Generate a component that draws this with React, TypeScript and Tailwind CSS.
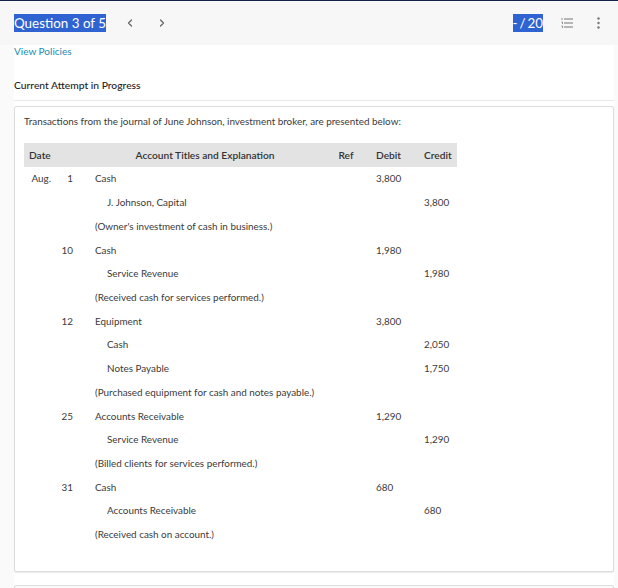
import { ChevronLeft, ChevronRight } from "lucide-react";

type Row = { date?: string; day?: string; account: string; indent?: boolean; debit?: string; credit?: string };

const rows: Row[] = [
  { date: "Aug.", day: "1", account: "Cash", debit: "3,800" },
  { account: "J. Johnson, Capital", indent: true, credit: "3,800" },
  { account: "(Owner's investment of cash in business.)" },
  { day: "10", account: "Cash", debit: "1,980" },
  { account: "Service Revenue", indent: true, credit: "1,980" },
  { account: "(Received cash for services performed.)" },
  { day: "12", account: "Equipment", debit: "3,800" },
  { account: "Cash", indent: true, credit: "2,050" },
  { account: "Notes Payable", indent: true, credit: "1,750" },
  { account: "(Purchased equipment for cash and notes payable.)" },
  { day: "25", account: "Accounts Receivable", debit: "1,290" },
  { account: "Service Revenue", indent: true, credit: "1,290" },
  { account: "(Billed clients for services performed.)" },
  { day: "31", account: "Cash", debit: "680" },
  { account: "Accounts Receivable", indent: true, credit: "680" },
  { account: "(Received cash on account.)" },
];

export default function App() {
  return (
    <div className="h-[588px] overflow-hidden bg-[#fafafa] font-['Lato',sans-serif] text-[#3a3a3a]">
      <div className="h-px bg-[#14204a]" />
      <div className="flex h-[44px] items-center bg-[#f7f7f7] pl-[14px] pr-[14px]">
        <span className="mb-[1px] bg-[#2f63d2] text-[13.4px] leading-[18px] text-white">Question 3 of 5</span>
        <ChevronLeft className="ml-[18px] h-[12px] w-[12px] text-[#666]" strokeWidth={2.5} />
        <ChevronRight className="ml-[20px] h-[12px] w-[12px] text-[#666]" strokeWidth={2.5} />
        <span className="mb-[1px] ml-auto whitespace-nowrap bg-[#2f63d2] text-[13.4px] leading-[18px] text-white [word-spacing:-1.5px]">- / 20</span>
        <svg className="ml-[18px] h-[12px] w-[12px]" viewBox="0 0 12 12" fill="none" stroke="#777">
          <path d="M3 2h9M3 6h9M3 10h9" strokeWidth="1.2" />
          <path d="M1 1v2M.5 5h1v2M.5 9h1v2" strokeWidth="0.8" />
        </svg>
        <svg className="ml-[24px] mr-[4px] h-[12px] w-[3px]" viewBox="0 0 3 12" fill="#777">
          <circle cx="1.5" cy="1.5" r="1.2" />
          <circle cx="1.5" cy="6" r="1.2" />
          <circle cx="1.5" cy="10.5" r="1.2" />
        </svg>
      </div>
      <div className="mx-[14px] mr-[4px] bg-white">
        <div className="h-[56px] border-b border-[#e8e8e8]">
          <a className="block text-[10px] leading-[13px] text-[#1a8bb5]">View Policies</a>
          <p className="mt-[21px] text-[10.3px] font-medium leading-[13px] text-[#222]">Current Attempt in Progress</p>
        </div>
        <div className="mt-[5px] h-[466px] rounded-[2px] border border-[#ddd] bg-white pl-[9px] pt-[8px] shadow-[0_1px_1px_rgba(0,0,0,0.08)]">
          <p className="text-[9.9px] leading-[13px]">Transactions from the journal of June Johnson, investment broker, are presented below:</p>
          <table className="mt-[15px] w-[433px] table-fixed border-collapse text-[9.9px] leading-[13px]">
            <colgroup>
              <col className="w-[34px]" />
              <col className="w-[29px]" />
              <col className="w-[236px]" />
              <col className="w-[46px]" />
              <col className="w-[48px]" />
              <col className="w-[40px]" />
            </colgroup>
            <thead>
              <tr className="h-[24px] bg-[#e3e3e3] text-[10.2px] text-[#333]">
                <th colSpan={2} className="pl-[5px] text-left font-semibold">Date</th>
                <th className="text-center font-semibold">Account Titles and Explanation</th>
                <th className="text-center font-semibold">Ref</th>
                <th className="pl-[7px] text-left font-semibold">Debit</th>
                <th className="pl-[7px] text-left font-semibold">Credit</th>
              </tr>
            </thead>
            <tbody>
              {rows.map((r, i) => (
                <tr key={i} className="h-[23.73px]">
                  <td className="pr-[7px] text-right">{r.date}</td>
                  <td className="pr-[14px] text-right">{r.day}</td>
                  <td className={r.indent ? "pl-[20px]" : "pl-[8px]"}>{r.account}</td>
                  <td />
                  <td className="pl-[7px]">{r.debit}</td>
                  <td className="pl-[7px]">{r.credit}</td>
                </tr>
              ))}
            </tbody>
          </table>
        </div>
        <div className="mt-[13px] h-[10px] rounded-[2px] border border-[#ddd] bg-[#fafafa]" />
      </div>
    </div>
  );
}
